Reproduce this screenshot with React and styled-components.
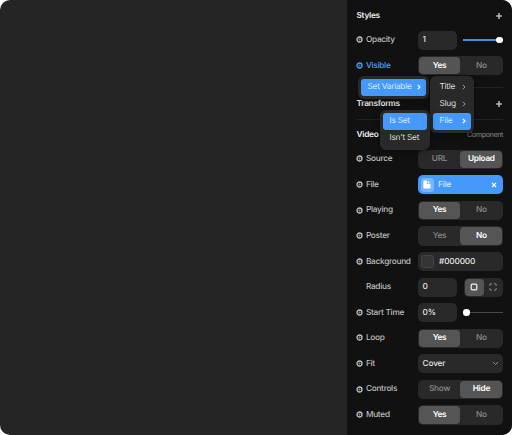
import React from "react";
import styled, { createGlobalStyle } from "styled-components";

const Global = createGlobalStyle`
  * { box-sizing: border-box; }
  body { margin: 0; background: #fff; font-family: Inter, "Liberation Sans", sans-serif; }
`;

const Window = styled.div`
  position: relative;
  display: flex;
  width: 512px;
  height: 435px;
  border-radius: 10px;
  overflow: hidden;
  background: #252525;
  color: #c4c4c4;
  font-size: 8.3px;
  letter-spacing: -0.29px;
  line-height: 12px;
  white-space: nowrap;
  text-rendering: geometricPrecision;
`;
const Canvas = styled.main`
  flex: 1;
`;
const Panel = styled.aside`
  width: 165px;
  padding: 0 9px 0 9.5px;
  background: #111;
`;
const Section = styled.section`
  border-top: ${(p) => (p.$first ? "0" : "1px solid #222")};
  padding-bottom: ${(p) => p.$bottom || 0}px;
`;
const Header = styled.header`
  display: flex;
  align-items: center;
  justify-content: space-between;
  height: ${(p) => p.$height}px;
  padding-top: 0.7px;
  color: #eee;
  font-weight: 600;
`;
const Note = styled.span`
  color: #858585;
  font-size: 7.2px;
  font-weight: 400;
  letter-spacing: -0.4px;
`;
const Rows = styled.div`
  display: grid;
  gap: 6.4px;
`;
const Row = styled.div`
  display: flex;
  align-items: center;
  height: 19.2px;
`;
const Label = styled.div`
  display: flex;
  align-items: center;
  width: 61.1px;
  flex: none;
  gap: 2.9px;
  padding-left: ${(p) => (p.$plain ? 9.4 : 0)}px;
  color: ${(p) => (p.$active ? "#4b9ffa" : "#bdbdbd")};
  font-weight: 500;
  svg { flex: none; margin: -0.8px 0 0 -0.5px; }
`;
const Segments = styled.div`
  display: flex;
  width: ${(p) => p.$width || 85.7}px;
  height: 19.2px;
  padding: 1px;
  border-radius: 5px;
  background: #292929;
`;
const Segment = styled.div`
  display: flex;
  flex: 1;
  align-items: center;
  justify-content: center;
  border-radius: 4px;
  background: ${(p) => (p.$on ? "#555" : "transparent")};
  color: ${(p) => (p.$on ? "#fff" : "#8b8b8b")};
  font-weight: ${(p) => (p.$on ? 600 : 500)};
`;
const Field = styled.div`
  display: flex;
  align-items: center;
  width: ${(p) => p.$width || 85.7}px;
  height: 19.2px;
  padding: 0 5px;
  flex: none;
  border-radius: 5px;
  background: #292929;
  color: #e4e4e4;
  font-weight: 500;
  letter-spacing: -0.2px;
`;
const SelectField = styled(Field)`
  justify-content: space-between;
  padding-right: 4px;
`;
const ColorField = styled(Field)`
  gap: 5px;
  padding: 0 3px;
`;
const Swatch = styled.span`
  width: 13.5px;
  height: 13.5px;
  border: 1px solid #444;
  border-radius: 2.5px;
  background: #353535;
`;
const FileField = styled(Field)`
  gap: 4px;
  padding: 0 6px 0 3px;
  background: #4499fb;
  color: #d9ebff;
  > svg { margin-left: auto; }
`;
const FileBadge = styled.span`
  display: flex;
  align-items: center;
  justify-content: center;
  width: 13.5px;
  height: 14px;
  border-radius: 3px;
  background: #78b5fc;
`;
const Beside = styled.div`
  display: flex;
  align-items: center;
  margin-left: ${(p) => p.$gap}px;
`;
const Track = styled.div`
  display: flex;
  align-items: center;
  justify-content: ${(p) => (p.$full ? "flex-end" : "flex-start")};
  width: 39.8px;
  height: 1.5px;
  background: ${(p) => (p.$full ? "#448fe4" : "#484848")};
`;
const Knob = styled.span`
  width: 6.6px;
  height: 6.6px;
  border-radius: 50%;
  background: #fff;
`;
const Menu = styled.div`
  position: absolute;
  left: ${(p) => p.$x}px;
  top: ${(p) => p.$y}px;
  width: ${(p) => p.$width}px;
  padding: 3px;
  border-radius: 6px;
  background: #292929;
  box-shadow: 0 2px 7px rgba(0, 0, 0, 0.35);
`;
const MenuItem = styled.div`
  display: flex;
  align-items: center;
  justify-content: space-between;
  height: 17px;
  padding: 0 5px 0 6.5px;
  border-radius: 3px;
  background: ${(p) => (p.$on ? "#4499fb" : "transparent")};
  color: ${(p) => (p.$on ? "#d9ebff" : "#dedede")};
  font-weight: 400;
  letter-spacing: -0.25px;
`;

const Plus = () => (
  <svg width="8" height="8" viewBox="0 0 8 8" stroke="#e8e8e8" strokeWidth="1.2">
    <path d="M4 1v6M1 4h6" />
  </svg>
);
const Bind = () => (
  <svg width="7" height="7" viewBox="0 0 7 7" fill="none" stroke="currentColor">
    <circle cx="3.5" cy="3.5" r="2.5" strokeWidth="1.3" />
    <path d="M3.5 1.8v3.4M1.8 3.5h3.4" strokeWidth=".4" />
  </svg>
);
const Chevron = ({ on }) => (
  <svg width="4" height="6" viewBox="0 0 4 6" fill="none" stroke={on ? "#fff" : "#a0a0a0"} strokeWidth={on ? 1.2 : 0.9}>
    <path d="M.8.8 3 3 .8 5.2" />
  </svg>
);
const Down = () => (
  <svg width="7" height="5" viewBox="0 0 7 5" fill="none" stroke="#999" strokeWidth=".9">
    <path d="m1 1 2.5 2.5L6 1" />
  </svg>
);
const Page = () => (
  <svg width="8" height="9" viewBox="0 0 8 9" fill="#fff">
    <path d="M1.6.4h2.2v2.8c0 .6.3.9.9.9h2.8v3.2c0 .8-.4 1.2-1.2 1.2H1.6C.8 8.5.4 8.1.4 7.3V1.6C.4.8.8.4 1.6.4Z" />
    <path d="M4.7.6 7.3 3.3H5q-.3 0-.3-.3Z" />
  </svg>
);
const Close = () => (
  <svg width="6" height="6" viewBox="0 0 6 6" stroke="#fff" strokeWidth="1.1">
    <path d="m1 1 4 4M5 1 1 5" />
  </svg>
);
const Joined = () => (
  <svg width="8" height="8" viewBox="0 0 8 8" fill="none" stroke="#f2f2f2" strokeWidth="1.2">
    <rect x="1.2" y="1.2" width="5.6" height="5.6" rx="1.1" />
  </svg>
);
const Corners = () => (
  <svg width="8" height="8" viewBox="0 0 8 8" fill="none" stroke="#999" strokeWidth="1">
    <path d="M.8 2.8V2Q.8.8 2 .8h.8M5.2.8H6Q7.2.8 7.2 2v.8M7.2 5.2V6Q7.2 7.2 6 7.2h-.8M2.8 7.2H2Q.8 7.2.8 6v-.8" />
  </svg>
);

const Property = ({ label, plain, active, children }) => (
  <Row>
    <Label $plain={plain} $active={active}>
      {!plain && <Bind />}
      {label}
    </Label>
    {children}
  </Row>
);
const Toggle = ({ label, options = ["Yes", "No"], value, active }) => (
  <Property label={label} active={active}>
    <Segments>
      {options.map((o) => (
        <Segment key={o} $on={o === value}>{o}</Segment>
      ))}
    </Segments>
  </Property>
);

export default function App() {
  return (
    <Window>
      <Global />
      <Canvas />
      <Panel>
        <Section $first $bottom={11.3}>
          <Header $height={30.6}>Styles<Plus /></Header>
          <Rows>
            <Property label="Opacity">
              <Field $width={39.7}>1</Field>
              <Beside $gap={6}><Track $full><Knob /></Track></Beside>
            </Property>
            <Toggle label="Visible" value="Yes" active />
          </Rows>
        </Section>
        <Section>
          <Header $height={31}>Transforms<Plus /></Header>
        </Section>
        <Section>
          <Header $height={30}>Video<Note>Component</Note></Header>
          <Rows>
            <Toggle label="Source" options={["URL", "Upload"]} value="Upload" />
            <Property label="File">
              <FileField><FileBadge><Page /></FileBadge>File<Close /></FileField>
            </Property>
            <Toggle label="Playing" value="Yes" />
            <Toggle label="Poster" value="No" />
            <Property label="Background">
              <ColorField><Swatch />#000000</ColorField>
            </Property>
            <Property label="Radius" plain>
              <Field $width={39.7}>0</Field>
              <Beside $gap={6.5}>
                <Segments $width={39.5}>
                  <Segment $on><Joined /></Segment>
                  <Segment><Corners /></Segment>
                </Segments>
              </Beside>
            </Property>
            <Property label="Start Time">
              <Field $width={39.7}>0%</Field>
              <Beside $gap={6}><Track><Knob /></Track></Beside>
            </Property>
            <Toggle label="Loop" value="Yes" />
            <Property label="Fit">
              <SelectField>Cover<Down /></SelectField>
            </Property>
            <Toggle label="Controls" options={["Show", "Hide"]} value="Hide" />
            <Toggle label="Muted" value="Yes" />
          </Rows>
        </Section>
      </Panel>
      <Menu $x={358} $y={75.8} $width={71}>
        <MenuItem $on>Set Variable<Chevron on /></MenuItem>
      </Menu>
      <Menu $x={430} $y={75.8} $width={44}>
        <MenuItem>Title<Chevron /></MenuItem>
        <MenuItem>Slug<Chevron /></MenuItem>
        <MenuItem $on>File<Chevron on /></MenuItem>
      </Menu>
      <Menu $x={380} $y={109.8} $width={49.5}>
        <MenuItem $on>Is Set</MenuItem>
        <MenuItem>Isn't Set</MenuItem>
      </Menu>
    </Window>
  );
}
